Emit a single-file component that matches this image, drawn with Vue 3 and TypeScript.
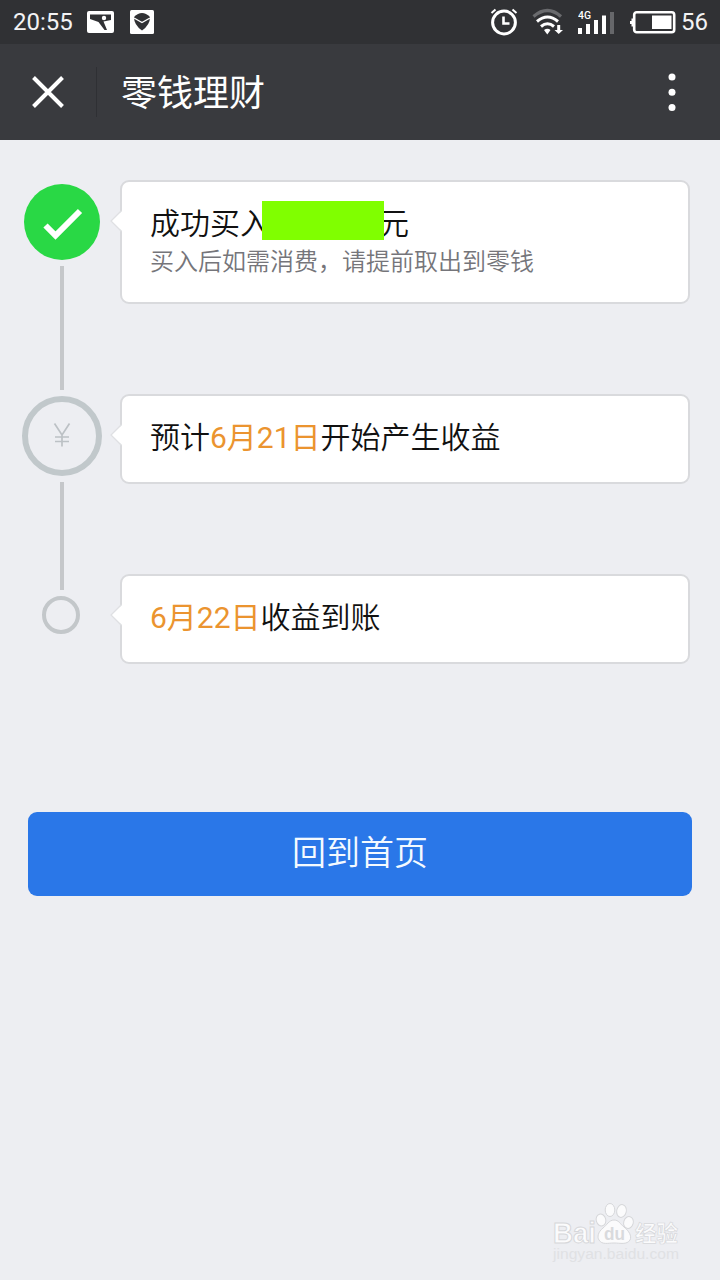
<script setup lang="ts">
interface Segment {
  text: string
  accent?: boolean
  masked?: boolean
}
interface Step {
  kind: 'done' | 'earning' | 'arrival'
  title: Segment[]
  note?: string
}

const steps: Step[] = [
  {
    kind: 'done',
    title: [{ text: '成功买入' }, { text: '', masked: true }, { text: '元' }],
    note: '买入后如需消费，请提前取出到零钱',
  },
  {
    kind: 'earning',
    title: [{ text: '预计' }, { text: '6月21日', accent: true }, { text: '开始产生收益' }],
  },
  {
    kind: 'arrival',
    title: [{ text: '6月22日', accent: true }, { text: '收益到账' }],
  },
]
</script>

<template>
  <div class="screen">
    <div class="status">
      <span class="clock">20:55</span>
      <svg class="picture" width="28" height="22" viewBox="0 0 28 22">
        <rect x="0" y="0" width="27" height="22" rx="2" fill="#fff" />
        <path d="M3 3.500H24V9L16.500 10.500L20 19H17.500L11.500 11L3 8Z" fill="#303134" />
        <circle cx="17" cy="7" r="2.200" fill="#fff" />
      </svg>
      <svg class="shield" width="24" height="24" viewBox="0 0 24 24">
        <rect width="24" height="24" rx="1.5" fill="#fff" />
        <path d="M4 7Q8 3 12 3Q16 3 20 7Q20 15 12 20.500Q4 15 4 7Z" fill="#303134" />
        <path d="M4 8L12 12.500L20 8" fill="none" stroke="#fff" stroke-width="1.400" />
      </svg>
      <span class="spacer"></span>
      <svg class="alarm" width="28" height="28" viewBox="0 0 28 28" fill="none" stroke="#fff">
        <circle cx="14" cy="14.500" r="11.400" stroke-width="3" />
        <path d="M13.500 8.500V15.500H19.500" stroke-width="2.600" />
        <path d="M1.500 5L5.500 1.500M26.500 5L22.500 1.500" stroke-width="2" />
      </svg>
      <svg class="wifi" width="32" height="28" viewBox="0 0 32 28" fill="none">
        <path d="M1.500 8.500Q15.500 -3.500 29 8.500" stroke="#6a6b6e" stroke-width="3.200" />
        <path d="M5 13.500Q15.500 4.500 26 13.500" stroke="#fff" stroke-width="3" />
        <path d="M9 18.500Q15.500 13 22 18.500" stroke="#fff" stroke-width="3" />
        <path d="M12 22Q15.500 19.500 18.500 22L15.300 26.500Z" fill="#fff" />
        <path d="M25.200 17H28.200V22H31L26.700 26L22.500 22H25.200Z" fill="#fff" />
      </svg>
      <svg class="signal" width="38" height="26" viewBox="0 0 38 26">
        <text x="0" y="9.500" font-size="11" font-weight="500" fill="#fff" textLength="13" lengthAdjust="spacingAndGlyphs">4G</text>
        <path d="M0 19H4V25H0ZM8 15H12V25H8ZM16 11H20V25H16ZM24 6.500H28V25H24Z" fill="#fff" />
        <rect x="32" y="3" width="4" height="22" fill="#66676a" />
      </svg>
      <svg class="battery" width="46" height="24" viewBox="0 0 46 24">
        <rect x="4.200" y="2.200" width="40" height="20" rx="2.500" fill="none" stroke="#fff" stroke-width="2.600" />
        <path d="M3 8.500H1.500V11H0V14H1.500V16.500H3Z" fill="#fff" />
        <rect x="22" y="5.500" width="19.500" height="13.500" fill="#fff" />
      </svg>
      <span class="level">56</span>
    </div>

    <header class="bar">
      <svg class="close" width="32" height="32" viewBox="0 0 32 32">
        <path d="M1.500 1.500L30.500 30.500M30.500 1.500L1.500 30.500" stroke="#fff" stroke-width="4" />
      </svg>
      <span class="divider"></span>
      <h1>零钱理财</h1>
      <svg class="more" width="8" height="40" viewBox="0 0 8 40" fill="#fff">
        <circle cx="4" cy="5" r="3.500" />
        <circle cx="4" cy="20.200" r="3.500" />
        <circle cx="4" cy="35.500" r="3.500" />
      </svg>
    </header>

    <main>
      <section v-for="step in steps" :key="step.kind" class="step" :class="step.kind">
        <div class="rail">
          <div class="marker">
            <svg v-if="step.kind === 'done'" width="76" height="76" viewBox="0 0 76 76">
              <path d="M21.500 41.500L31.500 51.500L56 27" fill="none" stroke="#fff" stroke-width="6" />
            </svg>
            <svg v-else-if="step.kind === 'earning'" width="20" height="26" viewBox="0 0 20 26">
              <path d="M2.500 0.500L10 12L17.500 0.500M10 12V23.500M3 14H17M3 18.500H17" fill="none" stroke="#bcc1c5" stroke-width="1.700" />
            </svg>
          </div>
          <span v-if="step.kind !== 'arrival'" class="line"></span>
        </div>
        <div class="card">
          <svg class="arrow" width="13" height="24" viewBox="0 0 13 24">
            <path d="M13 1L1.500 12L13 23Z" fill="#fff" />
            <path d="M11.500 1.500L1 12L11.500 22.500" fill="none" stroke="#dfe0e3" stroke-width="1.200" />
          </svg>
          <p class="title">
            <span v-for="(part, i) in step.title" :key="i" :class="{ accent: part.accent, masked: part.masked }">{{ part.text }}</span>
          </p>
          <p v-if="step.note" class="note">{{ step.note }}</p>
        </div>
      </section>
      <button class="home" type="button">回到首页</button>
    </main>

    <svg class="watermark" width="132" height="62" viewBox="0 0 132 62">
      <g class="brand" fill="#fbfbfc" stroke="#d6d7da" stroke-width="1">
        <text x="1" y="40.500" font-size="29" font-weight="700" textLength="43" lengthAdjust="spacingAndGlyphs">Bai</text>
        <ellipse cx="49" cy="18" rx="4.800" ry="6" transform="rotate(-15 49 18)" />
        <ellipse cx="58" cy="8" rx="4.800" ry="6.500" />
        <ellipse cx="69.500" cy="9" rx="4.800" ry="6.500" transform="rotate(12 69.500 9)" />
        <ellipse cx="76.500" cy="20.500" rx="4.800" ry="6" transform="rotate(15 76.500 20.500)" />
        <path d="M62 18C57 18 55 23 51 26C46 30 45 35 47 38C50 43 56 41 62 41C68 41 75 43 78 38C80 34 77 29 72 25C68 22 67 18 62 18Z" />
      </g>
      <text x="83" y="38.500" font-size="22" font-weight="700" fill="#fbfbfc" stroke="#d6d7da" stroke-width="0.700" textLength="43" lengthAdjust="spacingAndGlyphs">经验</text>
      <text class="brand" x="52" y="38" font-size="19" font-weight="700" fill="#d9dadd" textLength="21" lengthAdjust="spacingAndGlyphs">du</text>
      <text class="brand" x="1" y="57" font-size="14" fill="#e0e1e4" textLength="126" lengthAdjust="spacingAndGlyphs">jingyan.baidu.com</text>
    </svg>
  </div>
</template>

<style>
body {
  background: #edeff2;
}
</style>

<style scoped>
.screen {
  position: relative;
  width: 720px;
  height: 1280px;
  overflow: hidden;
  background: #edeef2;
  font-family: "Noto Sans CJK SC", sans-serif;
  font-weight: 350;
}
.status {
  display: flex;
  align-items: center;
  height: 44px;
  padding: 0 11px 0 13px;
  background: #303134;
  color: #f3f3f4;
  font: 400 24px/46px Roboto, sans-serif;
}
.clock {
  width: 74px;
}
.shield {
  margin-left: 15px;
}
.spacer {
  flex: 1;
}
.wifi {
  margin: 0 14px 0 14px;
}
.signal {
  margin: 0 14px 0 0;
}
.level {
  margin-left: 5px;
  width: 28px;
}
.bar {
  display: flex;
  align-items: center;
  height: 96px;
  padding: 0 44px 0 32px;
  background: #393a3e;
}
.divider {
  width: 1px;
  height: 50px;
  margin: 0 24px 0 32px;
  background: #2f3034;
}
h1 {
  flex: 1;
  margin: 0;
  padding-bottom: 5px;
  color: #fff;
  font-size: 36px;
  font-weight: 400;
  line-height: 50px;
}
main {
  padding-top: 40px;
}
.step {
  display: flex;
  align-items: flex-start;
  height: 180px;
}
.done {
  height: 214px;
}
.rail {
  display: flex;
  flex-direction: column;
  align-items: center;
  width: 116px;
  padding-left: 4px;
}
.marker {
  display: flex;
  align-items: center;
  justify-content: center;
  flex: none;
  box-sizing: border-box;
  border-radius: 50%;
}
.done .marker {
  width: 76px;
  height: 76px;
  margin-top: 4px;
  background: #29d845;
}
.earning .marker {
  width: 80px;
  height: 80px;
  margin-top: 2px;
  border: 6px solid #c1c8cb;
}
.arrival .marker {
  width: 38px;
  height: 38px;
  margin: 22px 2px 0 0;
  border: 4px solid #c3c7ca;
}
.line {
  flex: none;
  width: 4px;
  height: 124px;
  margin-top: 6px;
  background: #c5c7ca;
}
.earning .line {
  height: 108px;
}
.card {
  position: relative;
  box-sizing: border-box;
  width: 570px;
  height: 90px;
  padding: 22px 28px 0;
  border: 2px solid #d9dadd;
  border-radius: 9px;
  background: #fff;
}
.done .card {
  height: 124px;
}
.arrow {
  position: absolute;
  left: -12px;
  top: 27px;
}
.title,
.note {
  display: flex;
  margin: 0;
  white-space: nowrap;
}
.title {
  color: #111;
  font-family: Roboto, "Noto Sans CJK SC", sans-serif;
  font-size: 30px;
  line-height: 40px;
}
.accent {
  color: #eb942f;
  font-weight: 400;
}
.masked {
  position: relative;
  width: 109px;
}
.masked::after {
  content: "";
  position: absolute;
  left: -8px;
  top: -3px;
  width: 122px;
  height: 39px;
  background: #80ff00;
}
.note {
  margin-top: -2px;
  color: #75757a;
  font-size: 24px;
  line-height: 36px;
}
.home {
  display: block;
  width: 664px;
  height: 84px;
  margin: 58px 0 0 28px;
  padding: 0 0 8px;
  border: 0;
  border-radius: 9px;
  background: #2a77e8;
  color: #f4faff;
  font: inherit;
  font-size: 34px;
}
.watermark {
  position: absolute;
  left: 552px;
  top: 1202px;
}
.brand {
  font-family: "Liberation Sans", sans-serif;
}
</style>
